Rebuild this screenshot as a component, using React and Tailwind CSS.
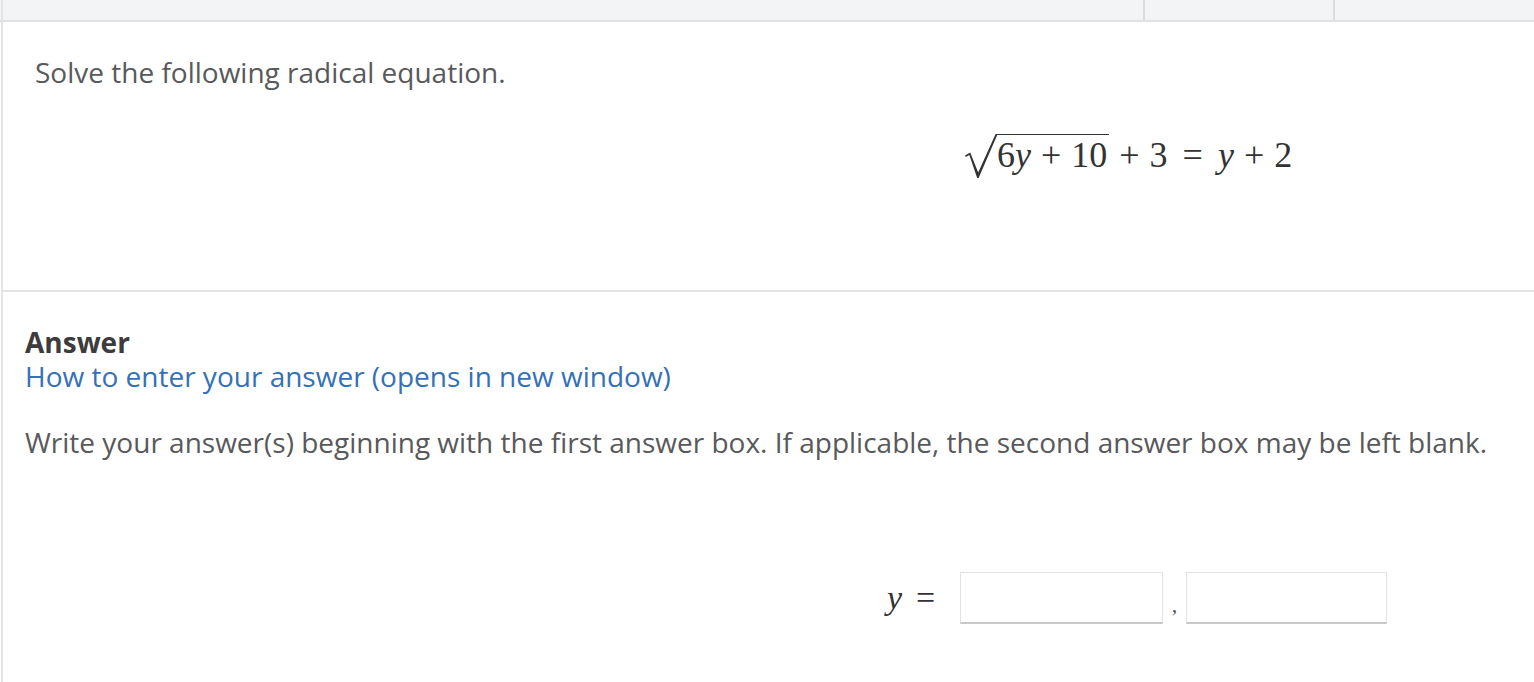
import React from "react";

function Radical() {
  return (
    <svg width="32" height="44" viewBox="0 0 32 44" className="inline-block align-[-11px]">
      <polygon
        points="0,21.5 5.2,18.6 13.2,38.5 30.6,0 32,0 32,1.5 13.6,44 12.2,44 4.3,21 0.8,22.9"
        fill="#333"
      />
    </svg>
  );
}

export default function App() {
  const serif = { fontFamily: '"Liberation Serif", "Times New Roman", serif' };
  return (
    <div className="w-[1534px] h-[682px] bg-white overflow-hidden" style={{ fontFamily: '"Open Sans", "Noto Sans", sans-serif' }}>
      {/* top bar */}
      <div className="flex h-[22px] bg-[#f3f4f6] border-b-2 border-[#e1e2e4]">
        <div className="flex-1 border-l-2 border-[#e4e4e4] ml-px" />
        <div className="w-[190px] border-l-2 border-[#dcdcdc]" />
        <div className="w-[201px] border-l-2 border-[#dcdcdc]" />
      </div>

      <div className="ml-px border-l-2 border-[#e4e4e4] h-[660px]">
        {/* problem */}
        <div className="h-[268px] pl-[32px] pt-[34px] text-[28px] leading-[32px] text-[#58595b]">
          <p>Solve the following radical equation.</p>
          <div className="mt-[46px] ml-[930px] text-[36px] leading-none text-[#333] whitespace-nowrap" style={serif}>
            <Radical />
            <span className="inline-block border-t-[1.5px] border-[#333] pt-[2px] pr-[2px]">
              6<i>y</i>
              <span className="mx-[10px]">+</span>
              10
            </span>
            <span className="mx-[10px]">+</span>3
            <span className="mx-[15px]">=</span>
            <i>y</i>
            <span className="mx-[10px]">+</span>2
          </div>
        </div>

        {/* answer */}
        <div className="border-t-2 border-[#e3e3e3] pl-[22px] pt-[33px] text-[28px] text-[#58595b]">
          <p className="font-bold text-[#3c3c3c] leading-[34px]">Answer</p>
          <a href="#" className="block leading-[35px] text-[#3471b5]">How to enter your answer (opens in new window)</a>
          <p className="mt-[31px] leading-[34px]">
            Write your answer(s) beginning with the first answer box. If applicable, the second answer box may be left blank.
          </p>
          <div className="mt-[113px] flex items-center">
            <div className="ml-[862px] w-[74px] text-[34px] text-[#333] leading-none whitespace-nowrap" style={serif}>
              <i>y</i>
              <span className="ml-[14px]">=</span>
            </div>
            <div className="ml-[-1px] w-[203px] h-[52px] border border-[#e2e2e2] border-b-2 border-b-[#c8c8c8]" />
            <span className="w-[23px] text-center text-[22px] text-[#555] leading-none pt-[14px]" style={serif}>,</span>
            <div className="w-[201px] h-[52px] border border-[#e2e2e2] border-b-2 border-b-[#c8c8c8]" />
          </div>
        </div>
      </div>
    </div>
  );
}
